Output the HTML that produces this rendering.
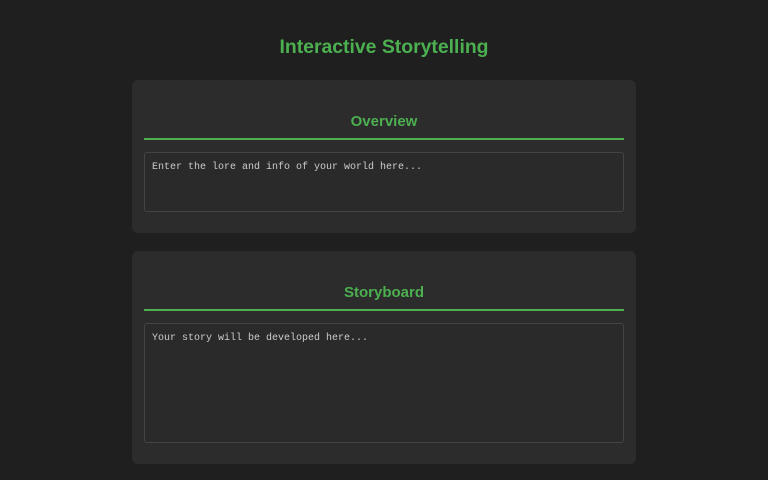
<!DOCTYPE html>
<html><head><style>
body{margin:0;background:#1f1f1f;font-family:"Liberation Sans",sans-serif;width:768px;height:480px;overflow:hidden}
h1{margin:0;position:absolute;top:36px;left:0;width:768px;text-align:center;color:#4caf50;font-size:19.4px;font-weight:bold}
.card{position:absolute;left:132px;width:504px;background:#2c2c2c;border-radius:6px}
h2{position:absolute;left:12px;width:480px;margin:0;text-align:center;color:#4caf50;font-size:15px;font-weight:bold;border-bottom:2px solid #4caf50;padding-bottom:8px}
.ta{position:absolute;left:12px;border:1px solid #444;border-radius:3px;background:#2a2a2a;color:#ccc;font-family:"Liberation Mono",monospace;font-size:10px;padding:9px 7px 7px;box-sizing:border-box;width:480px}
</style></head><body>
<h1>Interactive Storytelling</h1>
<div class="card" style="top:80px;height:153px">
<h2 style="top:33px">Overview</h2>
<div class="ta" style="top:72px;height:60px">Enter the lore and info of your world here...</div>
</div>
<div class="card" style="top:251px;height:213px">
<h2 style="top:33px">Storyboard</h2>
<div class="ta" style="top:72px;height:120px">Your story will be developed here...</div>
</div>
</body></html>
